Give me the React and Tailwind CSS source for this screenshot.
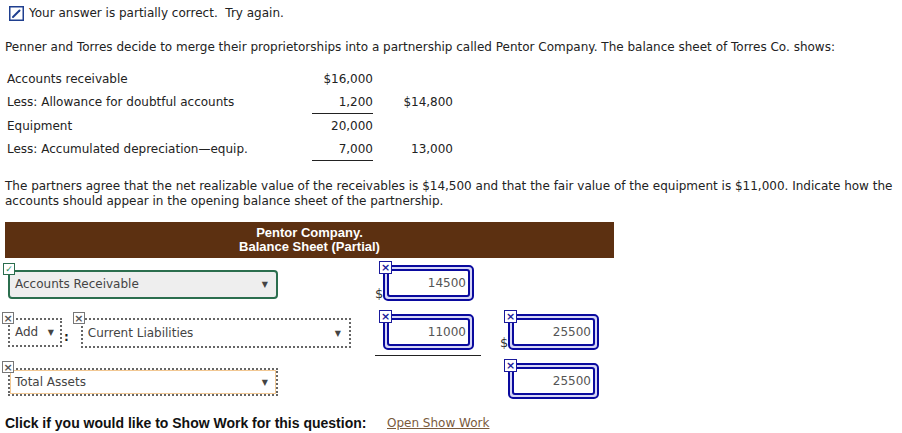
import React from "react";

const BlueX = () => (
  <span className="absolute -left-[4px] -top-[4px] z-10 flex h-[13px] w-[13px] items-center justify-center border border-[#1a1a9c] bg-white text-[11px] font-bold leading-none text-[#1a1a9c]">
    ×
  </span>
);

const GrayX = ({ className }) => (
  <span
    className={
      "absolute flex h-[12px] w-[12px] items-center justify-center border border-[#777] bg-white text-[11px] font-bold leading-none text-[#555] " +
      className
    }
  >
    ×
  </span>
);

const AmountBox = ({ value, dollar }) => (
  <div className="flex items-end">
    <span className="w-[8px] text-[13px] leading-[14px] text-[#333]">
      {dollar ? "$" : ""}
    </span>
    <div className="relative">
      <BlueX />
      <div className="h-[36px] w-[91px] rounded-[5px] border-2 border-[#0a0a9e] bg-[#d6d6f6] p-[2px]">
        <div className="flex h-full items-center justify-end rounded-[3px] border-2 border-[#0a0a9e] bg-white pr-[2px] text-[12px] text-[#555]">
          {value}
        </div>
      </div>
    </div>
  </div>
);

const Arrow = () => <span className="text-[8px] text-[#444]">▼</span>;

const App = () => {
  return (
    <div className="h-[433px] w-[902px] overflow-hidden bg-white font-['DejaVu_Sans',sans-serif] text-[12px] leading-[15px] text-[#222]">
      <div className="flex items-center pl-[9px] pt-[6px]">
        <svg width="15" height="15" viewBox="0 0 15 15">
          <rect x="0.75" y="0.75" width="13.5" height="13.5" fill="white" stroke="#1f3f8f" strokeWidth="1.5" />
          <path d="M4 11 L10.5 4.5" stroke="#1f3f8f" strokeWidth="2" strokeLinecap="round" />
        </svg>
        <span className="ml-[5px]">Your answer is partially correct.&nbsp; Try again.</span>
      </div>

      <div className="pl-[5px]">
        <p className="mt-[19px]">
          Penner and Torres decide to merge their proprietorships into a partnership called Pentor Company. The balance sheet of Torres Co. shows:
        </p>

        <div className="mt-[13px] w-[450px] pl-[2px]">
          <div className="flex h-[23px] items-center">
            <span className="w-[305px]">Accounts receivable</span>
            <span className="w-[61px] text-right">$16,000</span>
          </div>
          <div className="flex h-[23px] items-center">
            <span className="w-[305px]">Less: Allowance for doubtful accounts</span>
            <span className="flex h-full w-[61px] items-center justify-end border-b border-[#222]">1,200</span>
            <span className="w-[80px] text-right">$14,800</span>
          </div>
          <div className="flex h-[24px] items-center">
            <span className="w-[305px]">Equipment</span>
            <span className="w-[61px] text-right">20,000</span>
          </div>
          <div className="flex h-[23px] items-center">
            <span className="w-[305px]">Less: Accumulated depreciation—equip.</span>
            <span className="flex h-full w-[61px] items-center justify-end border-b border-[#222]">7,000</span>
            <span className="w-[80px] text-right">13,000</span>
          </div>
        </div>

        <p className="mt-[18px] whitespace-nowrap">
          The partners agree that the net realizable value of the receivables is $14,500 and that the fair value of the equipment is $11,000. Indicate how the
          <br />
          accounts should appear in the opening balance sheet of the partnership.
        </p>

        <div className="mt-[13px] flex h-[36px] w-[609px] flex-col items-center justify-center bg-[#5c3011] font-['Liberation_Sans',sans-serif] text-[13px] font-bold leading-[14px] text-white">
          <span>Pentor Company.</span>
          <span>Balance Sheet (Partial)</span>
        </div>
      </div>

      {/* row: accounts receivable */}
      <div className="flex h-[50px]">
        <div className="relative w-[375px] pl-[8px] pt-[12px]">
          <span className="absolute left-[3px] top-[5px] flex h-[12px] w-[12px] items-center justify-center border border-[#2b6e4e] bg-white text-[9px] leading-none text-[#2b8e5e]">
            ✓
          </span>
          <div className="flex h-[29px] w-[270px] items-center justify-between rounded-[4px] border-2 border-[#2b6e4e] bg-[#eeeeee] pl-[5px] pr-[8px] text-[#444]">
            <span>Accounts Receivable</span>
            <Arrow />
          </div>
        </div>
        <div className="pt-[7px]">
          <AmountBox value="14500" dollar />
        </div>
      </div>

      {/* row: add current liabilities */}
      <div className="flex h-[48px]">
        <div className="relative flex w-[375px] items-start pl-[8px] pt-[10px]">
          <GrayX className="left-[2px] top-[4px]" />
          <div className="flex h-[29px] w-[54px] items-center justify-between border-2 border-dotted border-[#666] pl-[5px] pr-[6px] text-[#444]">
            <span>Add</span>
            <Arrow />
          </div>
          <span className="ml-[2px] mt-[12px] font-bold leading-[14px]">:</span>
          <div className="relative ml-[12px]">
            <GrayX className="-left-[8px] -top-[6px]" />
            <div className="flex h-[30px] w-[270px] items-center justify-between border-2 border-dotted border-[#666] pl-[5px] pr-[8px] text-[#444]">
              <span>Current Liabilities</span>
              <Arrow />
            </div>
          </div>
        </div>
        <div className="pt-[6px]">
          <div className="w-[106px] border-b border-[#222] pb-[5px]">
            <AmountBox value="11000" />
          </div>
        </div>
        <div className="ml-[19px] pt-[6px]">
          <AmountBox value="25500" dollar />
        </div>
      </div>

      {/* row: total assets */}
      <div className="flex h-[44px]">
        <div className="relative w-[500px] pl-[8px] pt-[12px]">
          <GrayX className="left-[2px] top-[5px]" />
          <div className="h-[28px] w-[270px] border-2 border-dotted border-[#666]">
            <div className="flex h-full items-center justify-between border border-[#f2c893] pl-[4px] pr-[7px] text-[#444]">
              <span>Total Assets</span>
              <Arrow />
            </div>
          </div>
        </div>
        <div className="pt-[7px]">
          <AmountBox value="25500" />
        </div>
      </div>

      <div className="flex items-center pl-[5px] pt-[16px]">
        <span className="w-[382px] font-['Liberation_Sans',sans-serif] text-[14px] font-bold text-[#111]">
          Click if you would like to Show Work for this question:
        </span>
        <span className="text-[#7a5a3c] underline">Open Show Work</span>
      </div>
    </div>
  );
};

export default App;
